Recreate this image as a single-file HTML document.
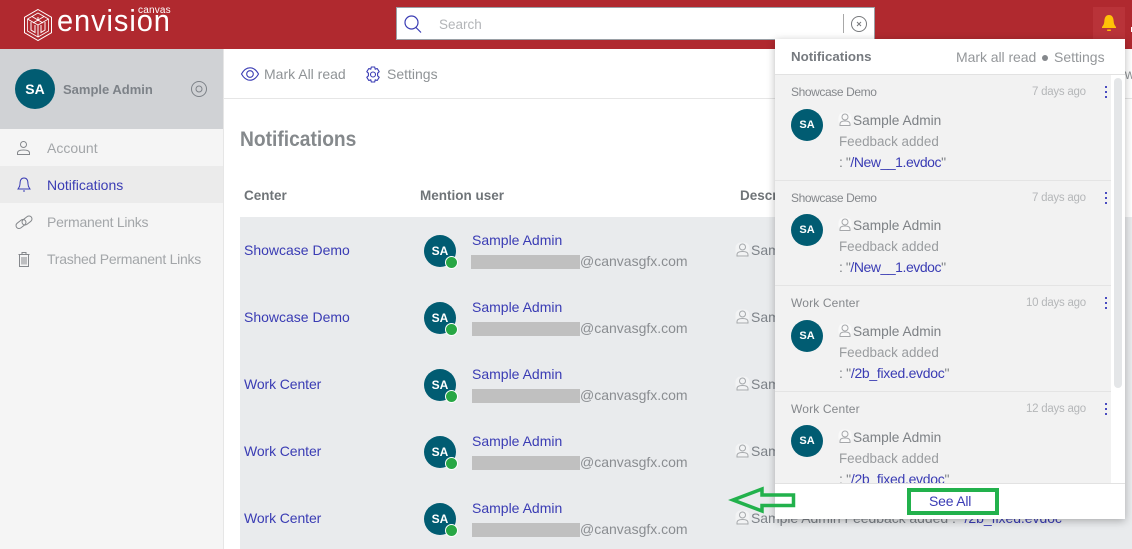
<!DOCTYPE html>
<html><head><meta charset="utf-8"><style>
*{box-sizing:border-box}
html,body{margin:0;padding:0}
body{width:1132px;height:549px;overflow:hidden;position:relative;background:#fff;font-family:"Liberation Sans",sans-serif;font-size:14px;color:#8a8d91}
.a{position:absolute}
.t{position:absolute;white-space:nowrap;line-height:18px}
.l{color:#3a3cb4}
.av{position:absolute;width:32px;height:32px;border-radius:50%;background:#015c72;color:#fff;font-weight:bold;font-size:12px;line-height:32px;text-align:center}
.dot{position:absolute;width:13px;height:13px;border-radius:50%;background:#28a745;border:1.5px solid #fff}
.bar{position:absolute;background:#c0c0c0;width:108px;height:14px}
.h{font-weight:bold;color:#6f7478;font-size:13.5px}
.f{letter-spacing:-.25px}
.fb{color:#999c9f;font-size:13.4px}
.n{color:#7d8185;font-size:13.7px}
.c{font-size:12px;color:#85888c}
.d{font-size:11.5px;letter-spacing:-.25px;color:#b5b7b9}
svg{position:absolute;overflow:visible}
</style></head><body>

<!-- header -->
<div class="a" style="left:0;top:0;width:1132px;height:49px;background:#b0292f"></div>
<svg style="left:23px;top:9px" width="30" height="32" viewBox="0 0 30 32" fill="none" stroke="#fff" stroke-width="1"><path d="M15 .5 28.500 8.300V23.700L15 31.500 1.500 23.700V8.300Z"/><path d="M15 4 25.500 10V22L15 28 4.500 22V10Z" stroke-width=".8"/><path d="M15 16V28M15 16 4.500 10M15 16 25.500 10M9 7.500 20 14M21 7.500 10 14M8 13V21L12 23.500V16M22 13V21L18 23.500V16M15 8V12" stroke-width="1"/></svg>
<div class="t" style="left:57px;top:4px;color:#fff;font-size:31px;line-height:34px;letter-spacing:1px;transform-origin:0 0;transform:scaleX(.935)">envision</div>
<div class="t" style="left:138px;top:5px;color:#fff;font-size:10px;line-height:12px;letter-spacing:.2px">canvas</div>

<div class="a" style="left:396px;top:7px;width:479px;height:33px;background:#fff;border:1px solid #9aa0a6"></div>
<svg style="left:404px;top:15px" width="18" height="18" fill="none" stroke="#3a3cb4" stroke-width="1.2"><circle cx="7.500" cy="7.500" r="6.500"/><path d="M12 12.500 17 17.500"/></svg>
<div class="t" style="left:439px;top:16px;color:#b3b5b8;font-size:13.5px">Search</div>
<div class="a" style="left:843px;top:14px;width:1px;height:19px;background:#a8a8a8"></div>
<svg style="left:851px;top:16px" width="16" height="16" fill="none" stroke="#77797c"><circle cx="8" cy="8" r="7.500"/><path d="M6 6 10 10M10 6 6 10"/></svg>

<div class="a" style="left:1093px;top:7px;width:32px;height:33px;background:#b93339"></div>
<svg style="left:1101px;top:15px" width="16" height="17"><path d="M8 0C11.500 0 12.500 3 12.700 6.500 12.900 9.500 14 10.500 15 12V13H1V12C2 10.500 3.100 9.500 3.300 6.500 3.500 3 4.500 0 8 0Z" fill="#ffc107"/><rect x="6" y="14.500" width="4" height="1.500" rx=".7" fill="#ffc107"/></svg>
<div class="a" style="left:1131px;top:27px;width:1px;height:5px;background:#fff"></div>

<!-- sidebar -->
<div class="a" style="left:0;top:49px;width:224px;height:500px;background:#f5f5f5;border-right:1px solid #e6e6e6"></div>
<div class="a" style="left:0;top:49px;width:223px;height:80px;background:#d0d2d5"></div>
<div class="a" style="left:15px;top:69px;width:40px;height:40px;border-radius:50%;background:#015c72;color:#fff;font-weight:bold;font-size:14px;line-height:40px;text-align:center">SA</div>
<div class="t" style="left:63px;top:81px;font-weight:bold;font-size:13px;color:#7d8288">Sample Admin</div>
<svg style="left:191px;top:81px" width="16" height="16" fill="none" stroke="#7d8288"><circle cx="8" cy="8" r="7.500"/><circle cx="8" cy="8" r="3"/></svg>

<div class="a" style="left:0;top:166px;width:223px;height:37px;background:#ebebeb"></div>
<svg style="left:17px;top:141px" width="13" height="14" fill="none" stroke="#85888c"><circle cx="6.500" cy="3.500" r="3"/><path d="M.5 13.500V12C.5 10 2.500 9 6.500 9S12.500 10 12.500 12V13.500Z"/></svg>
<svg style="left:17px;top:177px" width="14" height="16" fill="none" stroke="#3a3cb4"><path d="M7 1C10 1 11 3.500 11 7 11 9.500 12 10.500 13 12H1C2 10.500 3 9.500 3 7 3 3.500 4 1 7 1Z"/><path d="M6 14H8"/></svg>
<svg style="left:15px;top:215px" width="18" height="15" fill="none" stroke="#85888c"><rect x="6.500" y="2.500" width="11" height="6" rx="3" transform="rotate(-38 12 5.500)"/><rect x=".5" y="6" width="11" height="6" rx="3" transform="rotate(-38 6 9)"/></svg>
<svg style="left:18px;top:252px" width="12" height="15" fill="none" stroke="#85888c"><path d="M.5 2.500H11.500M4 2.500V.5H8V2.500M1.500 2.500V14.500H10.500V2.500M4 5V12.500M6 5V12.500M8 5V12.500"/></svg>
<div class="t" style="left:47px;top:139px;color:#a3a6a9">Account</div>
<div class="t l" style="left:47px;top:176px">Notifications</div>
<div class="t f" style="left:47px;top:213px;color:#a3a6a9">Permanent Links</div>
<div class="t f" style="left:47px;top:250px;color:#a3a6a9">Trashed Permanent Links</div>

<!-- toolbar -->
<div class="a" style="left:224px;top:98px;width:908px;height:1px;background:#e6e6e6"></div>
<svg style="left:241px;top:67px" width="18" height="14" fill="none" stroke="#3a3cb4" stroke-width="1.1"><path d="M.5 7C3 2.500 6 .8 9 .8S15 2.500 17.500 7C15 11.500 12 13.200 9 13.200S3 11.500 .5 7Z"/><circle cx="9" cy="7" r="3.300"/></svg>
<div class="t" style="left:264px;top:65px;color:#8f9396">Mark All read</div>
<svg style="left:365px;top:66px" width="16" height="17" viewBox="0 0 16 17" fill="none" stroke="#3a3cb4" stroke-width="1.1" stroke-linejoin="round"><path d="M6.300 1H9.700L10.200 3.200 12.200 2.500 14.200 5.700 12.600 7.200V9.800L14.200 11.300 12.200 14.500 10.200 13.800 9.700 16H6.300L5.800 13.800 3.800 14.500 1.800 11.300 3.400 9.800V7.200L1.800 5.700 3.800 2.500 5.800 3.200Z"/><circle cx="8" cy="8.500" r="2.500"/></svg>
<div class="t" style="left:387px;top:65px;color:#8f9396">Settings</div>
<div class="t" style="left:1117px;top:65px;color:#8f9396">ow</div>

<div class="t" style="left:240px;top:126px;font-size:21px;line-height:28px;font-weight:bold;color:#85898c;transform-origin:0 0;transform:scaleX(.915)">Notifications</div>

<!-- table -->
<div class="t h" style="left:244px;top:187px">Center</div>
<div class="t h" style="left:420px;top:187px">Mention user</div>
<div class="t h" style="left:740px;top:187px">Description</div>
<div class="a" style="left:240px;top:217px;width:892px;height:332px;background:#e9ebed"></div>

<div class="t l" style="left:244px;top:241px">Showcase Demo</div>
<div class="av" style="left:424px;top:235px">SA</div><div class="dot" style="left:445px;top:256px"></div>
<div class="t l" style="left:472px;top:231px">Sample Admin</div>
<div class="bar" style="left:471px;top:255px;width:109px"></div><div class="t" style="left:580px;top:252px">@canvasgfx.com</div>
<svg style="left:736px;top:243px" width="13" height="14" fill="none" stroke="#a5a8ab"><rect x="-.5" y="-.5" width="14" height="15" rx="5" fill="#f2f3f4" stroke="none"/><circle cx="6.500" cy="4" r="3"/><path d="M1 13V11.500C1 9.500 3 8.500 6.500 8.500S12 9.500 12 11.500V13Z"/></svg>
<div class="t" style="left:751px;top:241px;color:#7d8288">Sample</div>

<div class="t l" style="left:244px;top:308px">Showcase Demo</div>
<div class="av" style="left:424px;top:302px">SA</div><div class="dot" style="left:445px;top:323px"></div>
<div class="t l" style="left:472px;top:298px">Sample Admin</div>
<div class="bar" style="left:472px;top:322px"></div><div class="t" style="left:580px;top:319px">@canvasgfx.com</div>
<svg style="left:736px;top:310px" width="13" height="14" fill="none" stroke="#a5a8ab"><rect x="-.5" y="-.5" width="14" height="15" rx="5" fill="#f2f3f4" stroke="none"/><circle cx="6.500" cy="4" r="3"/><path d="M1 13V11.500C1 9.500 3 8.500 6.500 8.500S12 9.500 12 11.500V13Z"/></svg>
<div class="t" style="left:751px;top:308px;color:#7d8288">Sample</div>

<div class="t l" style="left:244px;top:375px;letter-spacing:-.1px">Work Center</div>
<div class="av" style="left:424px;top:369px">SA</div><div class="dot" style="left:445px;top:390px"></div>
<div class="t l" style="left:472px;top:365px">Sample Admin</div>
<div class="bar" style="left:472px;top:389px"></div><div class="t" style="left:580px;top:386px">@canvasgfx.com</div>
<svg style="left:736px;top:377px" width="13" height="14" fill="none" stroke="#a5a8ab"><rect x="-.5" y="-.5" width="14" height="15" rx="5" fill="#f2f3f4" stroke="none"/><circle cx="6.500" cy="4" r="3"/><path d="M1 13V11.500C1 9.500 3 8.500 6.500 8.500S12 9.500 12 11.500V13Z"/></svg>
<div class="t" style="left:751px;top:375px;color:#7d8288">Sample</div>

<div class="t l" style="left:244px;top:442px;letter-spacing:-.1px">Work Center</div>
<div class="av" style="left:424px;top:436px">SA</div><div class="dot" style="left:445px;top:457px"></div>
<div class="t l" style="left:472px;top:432px">Sample Admin</div>
<div class="bar" style="left:472px;top:456px"></div><div class="t" style="left:580px;top:453px">@canvasgfx.com</div>
<svg style="left:736px;top:444px" width="13" height="14" fill="none" stroke="#a5a8ab"><rect x="-.5" y="-.5" width="14" height="15" rx="5" fill="#f2f3f4" stroke="none"/><circle cx="6.500" cy="4" r="3"/><path d="M1 13V11.500C1 9.500 3 8.500 6.500 8.500S12 9.500 12 11.500V13Z"/></svg>
<div class="t" style="left:751px;top:442px;color:#7d8288">Sample</div>

<div class="t l" style="left:244px;top:509px;letter-spacing:-.1px">Work Center</div>
<div class="av" style="left:424px;top:503px">SA</div><div class="dot" style="left:445px;top:524px"></div>
<div class="t l" style="left:472px;top:499px">Sample Admin</div>
<div class="bar" style="left:472px;top:523px"></div><div class="t" style="left:580px;top:520px">@canvasgfx.com</div>
<svg style="left:736px;top:511px" width="13" height="14" fill="none" stroke="#a5a8ab"><rect x="-.5" y="-.5" width="14" height="15" rx="5" fill="#f2f3f4" stroke="none"/><circle cx="6.500" cy="4" r="3"/><path d="M1 13V11.500C1 9.500 3 8.500 6.500 8.500S12 9.500 12 11.500V13Z"/></svg>
<div class="t" style="left:751px;top:509px;color:#7d8288;letter-spacing:-.05px">Sample Admin Feedback added : <span class="l">"/2b_fixed.evdoc"</span></div>

<!-- dropdown -->
<div class="a" style="left:775px;top:39px;width:350px;height:480px;background:#fff;box-shadow:0 2px 8px rgba(0,0,0,.28);overflow:hidden">
  <div class="a" style="left:0;top:35px;width:350px;height:1px;background:#e2e2e2"></div>
  <div class="t" style="left:16px;top:9px;font-weight:bold;font-size:13.3px;color:#767a7f">Notifications</div>
  <div class="t" style="left:181px;top:9px;color:#94979a;letter-spacing:-.05px">Mark all read</div>
  <div class="a" style="left:267px;top:16px;width:6px;height:6px;border-radius:50%;background:#85888c"></div>
  <div class="t" style="left:279px;top:9px;color:#94979a">Settings</div>

  <div class="a" style="left:0;top:36px;width:350px;height:409px;background:#f2f2f2;overflow:hidden">
    <div class="a" style="left:336px;top:0;width:14px;height:409px;background:#fff"></div>
    <div class="a" style="left:339px;top:3px;width:8px;height:310px;border-radius:4px;background:#e4e6e8"></div>

    <div class="t c" style="left:16px;top:8px;letter-spacing:-.4px">Showcase Demo</div>
    <div class="t d" style="left:257px;top:8px">7 days ago</div>
    <div class="a" style="left:330px;top:11px;width:2px;height:12px;background:repeating-linear-gradient(#4a4cc0 0 2px,transparent 2px 5px)"></div>
    <div class="av" style="left:16px;top:34px;font-size:11px">SA</div>
    <svg style="left:64px;top:38px" width="12" height="13" fill="none" stroke="#a5a7aa"><rect x="-.5" y="-.5" width="13" height="14" rx="5" fill="#f9f9f9" stroke="none"/><circle cx="6" cy="4" r="3"/><path d="M1 12.500V11C1 9 3 8 6 8S11 9 11 11V12.500Z"/></svg>
    <div class="t n" style="left:78px;top:37px">Sample Admin</div>
    <div class="t fb" style="left:64px;top:58px">Feedback added</div>
    <div class="t" style="left:64px;top:78px;color:#7d8185;letter-spacing:-.45px">: "<span class="l">/New__1.evdoc</span>"</div>
    <div class="a" style="left:0;top:105px;width:336px;height:1px;background:#e4e4e4"></div>

    <div class="t c" style="left:16px;top:114px;letter-spacing:-.4px">Showcase Demo</div>
    <div class="t d" style="left:257px;top:114px">7 days ago</div>
    <div class="a" style="left:330px;top:117px;width:2px;height:12px;background:repeating-linear-gradient(#4a4cc0 0 2px,transparent 2px 5px)"></div>
    <div class="av" style="left:16px;top:139px;font-size:11px">SA</div>
    <svg style="left:64px;top:143px" width="12" height="13" fill="none" stroke="#a5a7aa"><rect x="-.5" y="-.5" width="13" height="14" rx="5" fill="#f9f9f9" stroke="none"/><circle cx="6" cy="4" r="3"/><path d="M1 12.500V11C1 9 3 8 6 8S11 9 11 11V12.500Z"/></svg>
    <div class="t n" style="left:78px;top:142px">Sample Admin</div>
    <div class="t fb" style="left:64px;top:163px">Feedback added</div>
    <div class="t" style="left:64px;top:183px;color:#7d8185;letter-spacing:-.45px">: "<span class="l">/New__1.evdoc</span>"</div>
    <div class="a" style="left:0;top:210px;width:336px;height:1px;background:#e4e4e4"></div>

    <div class="t c" style="left:16px;top:219px;letter-spacing:.15px">Work Center</div>
    <div class="t d" style="left:251px;top:219px">10 days ago</div>
    <div class="a" style="left:330px;top:222px;width:2px;height:12px;background:repeating-linear-gradient(#4a4cc0 0 2px,transparent 2px 5px)"></div>
    <div class="av" style="left:16px;top:245px;font-size:11px">SA</div>
    <svg style="left:64px;top:249px" width="12" height="13" fill="none" stroke="#a5a7aa"><rect x="-.5" y="-.5" width="13" height="14" rx="5" fill="#f9f9f9" stroke="none"/><circle cx="6" cy="4" r="3"/><path d="M1 12.500V11C1 9 3 8 6 8S11 9 11 11V12.500Z"/></svg>
    <div class="t n" style="left:78px;top:248px">Sample Admin</div>
    <div class="t fb" style="left:64px;top:269px">Feedback added</div>
    <div class="t" style="left:64px;top:289px;color:#7d8185;letter-spacing:-.3px">: "<span class="l">/2b_fixed.evdoc</span>"</div>
    <div class="a" style="left:0;top:316px;width:336px;height:1px;background:#e4e4e4"></div>

    <div class="t c" style="left:16px;top:325px;letter-spacing:.15px">Work Center</div>
    <div class="t d" style="left:251px;top:325px">12 days ago</div>
    <div class="a" style="left:330px;top:328px;width:2px;height:12px;background:repeating-linear-gradient(#4a4cc0 0 2px,transparent 2px 5px)"></div>
    <div class="av" style="left:16px;top:350px;font-size:11px">SA</div>
    <svg style="left:64px;top:355px" width="12" height="13" fill="none" stroke="#a5a7aa"><rect x="-.5" y="-.5" width="13" height="14" rx="5" fill="#f9f9f9" stroke="none"/><circle cx="6" cy="4" r="3"/><path d="M1 12.500V11C1 9 3 8 6 8S11 9 11 11V12.500Z"/></svg>
    <div class="t n" style="left:78px;top:354px">Sample Admin</div>
    <div class="t fb" style="left:64px;top:375px">Feedback added</div>
    <div class="t" style="left:64px;top:395px;color:#7d8185;letter-spacing:-.3px">: "<span class="l">/2b_fixed.evdoc</span>"</div>
  </div>
  <div class="a" style="left:0;top:444px;width:350px;height:1px;background:#e2e2e2"></div>
  <div class="t l" style="left:154px;top:453px;letter-spacing:-.2px">See All</div>
</div>

<!-- annotations -->
<div class="a" style="left:907px;top:488px;width:92px;height:27px;border:4px solid #22b14c"></div>
<svg style="left:730px;top:487px" width="66" height="26" fill="none" stroke="#22b14c" stroke-width="3.500"><path d="M3 13 32 2V8H63.500V18.500H32V24Z"/></svg>

</body></html>
